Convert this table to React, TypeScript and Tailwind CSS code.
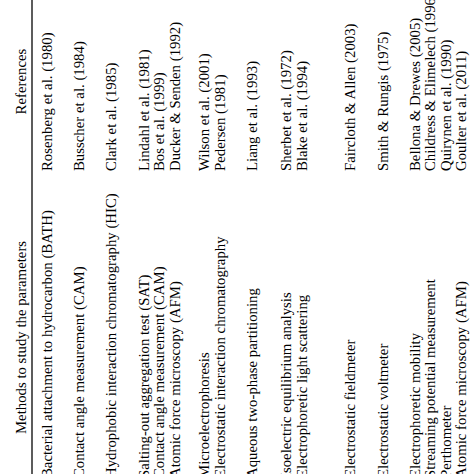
const rows = [
  {
    mt: 'mt-[7px]',
    methods: ['Bacterial attachment to hydrocarbon (BATH)'],
    refs: ['Rosenberg et al. (1980)'],
  },
  {
    mt: 'mt-[16.5px]',
    methods: ['Contact angle measurement (CAM)'],
    refs: ['Busscher et al. (1984)'],
  },
  {
    mt: 'mt-[16.5px]',
    methods: ['Hydrophobic interaction chromatography (HIC)'],
    refs: ['Clark et al. (1985)'],
  },
  {
    mt: 'mt-[17px]',
    methods: [
      'Salting-out aggregation test (SAT)',
      'Contact angle measurement (CAM)',
      'Atomic force microscopy (AFM)',
    ],
    refs: ['Lindahl et al. (1981)', 'Bos et al. (1999)', 'Ducker & Senden (1992)'],
  },
  {
    mt: 'mt-[14px]',
    methods: ['Microelectrophoresis', 'Electrostatic interaction chromatography'],
    refs: ['Wilson et al. (2001)', 'Pedersen (1981)'],
  },
  {
    mt: 'mt-[16.5px]',
    methods: ['Aqueous two-phase partitioning'],
    refs: ['Liang et al. (1993)'],
  },
  {
    mt: 'mt-[19px]',
    methods: ['Isoelectric equilibrium analysis', 'Electrophoretic light scattering'],
    refs: ['Sherbet et al. (1972)', 'Blake et al. (1994)'],
  },
  {
    mt: 'mt-[33px]',
    methods: ['Electrostatic fieldmeter'],
    refs: ['Faircloth & Allen (2003)'],
  },
  {
    mt: 'mt-[17px]',
    methods: ['Electrostatic voltmeter'],
    refs: ['Smith & Rungis (1975)'],
  },
  {
    mt: 'mt-[16.5px]',
    methods: [
      'Electrophoretic mobility',
      'Streaming potential measurement',
      'Perthometer',
      'Atomic force microscopy (AFM)',
    ],
    refs: [
      'Bellona & Drewes (2005)',
      'Childress & Elimelech (1996)',
      'Quirynen et al. (1990)',
      'Goulter et al. (2011)',
    ],
  },
];

export default function App() {
  return (
    <div className="relative w-[474px] h-[474px] overflow-hidden bg-white">
      {/* table is typeset normally, then turned a quarter turn counter-clockwise */}
      <div
        className="w-[474px] h-[474px] -rotate-90 text-[14.8px] leading-[15.5px] text-black whitespace-nowrap"
        style={{ fontFamily: '"Liberation Serif", "Times New Roman", serif' }}
      >
        <div className="ml-[-4px] w-[520px]">
          <div className="grid grid-cols-[307px_179px] pt-[14px]">
            <div className="pr-[26px] text-center">Methods to study the parameters</div>
            <div className="text-center">References</div>
          </div>
          <div className="mt-[1.5px] h-[2px] bg-[#5c5c5c]" />
          {rows.map((row, i) => (
            <div key={i} className={`grid grid-cols-[307px_1fr] ${row.mt}`}>
              <div>
                {row.methods.map((m) => (
                  <div key={m}>{m}</div>
                ))}
              </div>
              <div>
                {row.refs.map((r) => (
                  <div key={r}>{r}</div>
                ))}
              </div>
            </div>
          ))}
        </div>
      </div>
    </div>
  );
}
